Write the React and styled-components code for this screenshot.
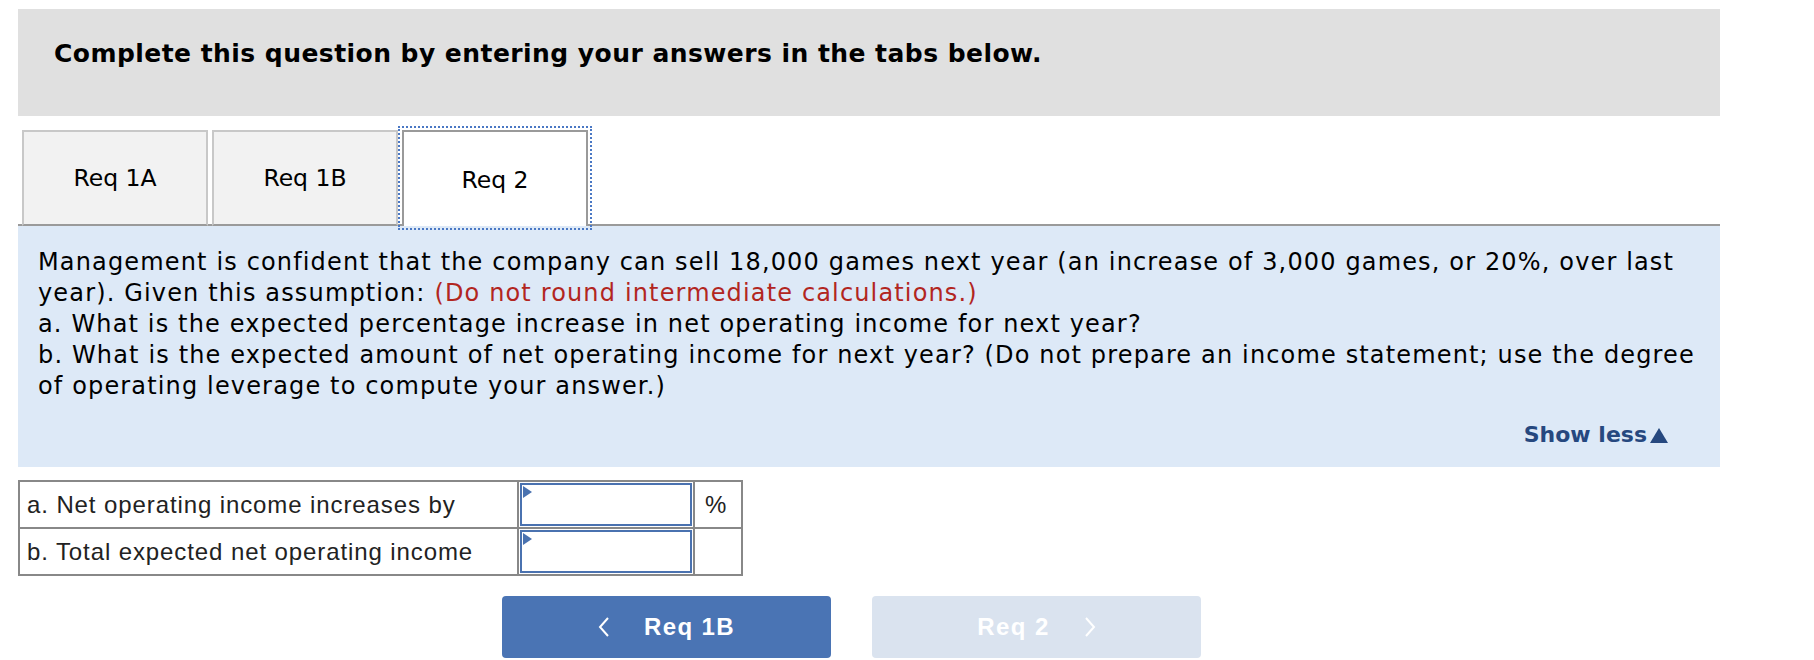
import React from "react";
import styled, { createGlobalStyle } from "styled-components";

const GlobalStyle = createGlobalStyle`
  body {
    margin: 0;
    background: #fff;
    font-family: "DejaVu Sans", Verdana, sans-serif;
    color: #000;
  }
`;

const Page = styled.div`
  width: 1702px;
  padding: 9px 0 0 18px;
`;

const Header = styled.div`
  height: 107px;
  box-sizing: border-box;
  padding: 30px 36px 0;
  background: #e0e0e0;
  font-size: 25px;
  line-height: 30px;
  font-weight: bold;
  letter-spacing: 0.45px;
`;

const TabRow = styled.div`
  display: flex;
  gap: 4px;
  margin-top: 14px;
  padding-left: 4px;
  height: 94px;
  border-bottom: 2px solid #9a9a9a;
`;

const Tab = styled.div`
  width: 186px;
  height: 96px;
  box-sizing: border-box;
  display: flex;
  align-items: center;
  justify-content: center;
  font-size: 23.5px;
  background: ${p => (p.$active ? "#fff" : "#f2f2f2")};
  border: 2px solid ${p => (p.$active ? "#9a9a9a" : "#c8c8c8")};
  border-bottom: ${p => (p.$active ? "none" : "2px solid #9a9a9a")};
  outline: ${p => (p.$active ? "2px dotted #4a78c4" : "none")};
  outline-offset: 2px;
  padding-top: ${p => (p.$active ? "2px" : "0")};
`;

const Panel = styled.div`
  height: 241px;
  box-sizing: border-box;
  padding: 21px 20px 0;
  background: #dde9f7;
`;

const Prompt = styled.p`
  margin: 0;
  font-size: 24px;
  line-height: 31px;
  letter-spacing: 1.15px;
  white-space: nowrap;
`;

const Note = styled.span`
  color: #b2261f;
`;

const ShowLessRow = styled.div`
  display: flex;
  justify-content: flex-end;
  align-items: center;
  margin-top: 20px;
  padding-right: 32px;
  font-size: 22px;
  line-height: 26px;
  font-weight: bold;
  color: #26487f;
`;

const Triangle = styled.span`
  display: inline-block;
  margin-left: 3px;
  width: 0;
  height: 0;
  border-left: 9.5px solid transparent;
  border-right: 9.5px solid transparent;
  border-bottom: 15px solid #26487f;
`;

const AnswerTable = styled.table`
  margin-top: 13px;
  border-collapse: collapse;
  border: 2px solid #777;
  font-family: "Liberation Sans", Arial, sans-serif;
`;

const LabelCell = styled.td`
  width: 499px;
  height: 43px;
  padding: 0 0 0 7px;
  border: 2px solid #888;
  font-size: 24px;
  letter-spacing: 0.9px;
  color: #222;
  box-sizing: border-box;
`;

const InputCell = styled.td`
  width: 176px;
  padding: 1px;
  border: 2px solid #888;
  box-sizing: border-box;
`;

const UnitCell = styled.td`
  width: 48px;
  padding: 0 0 0 10px;
  border: 2px solid #888;
  font-size: 24px;
  color: #222;
  box-sizing: border-box;
`;

const InputBox = styled.div`
  position: relative;
  height: 43px;
  box-sizing: border-box;
  border: 2px solid #4a72b0;
  background: #fff;

  &::before {
    content: "";
    position: absolute;
    left: 1px;
    top: 1px;
    border-top: 6px solid transparent;
    border-bottom: 6px solid transparent;
    border-left: 9px solid #4a72b0;
  }
`;

const Nav = styled.div`
  display: flex;
  gap: 41px;
  margin-top: 20px;
  padding-left: 484px;
`;

const NavButton = styled.button`
  width: 329px;
  height: 62px;
  border: none;
  border-radius: 4px;
  display: flex;
  align-items: center;
  justify-content: center;
  gap: 34px;
  background: ${p => (p.disabled ? "#dae3ef" : "#4a74b4")};
  color: #fff;
  font-family: "Liberation Sans", Arial, sans-serif;
  font-size: 24px;
  font-weight: bold;
  letter-spacing: 1.4px;
  cursor: ${p => (p.disabled ? "default" : "pointer")};
`;

const Chevron = ({ dir }) => (
  <svg width="12" height="20" viewBox="0 0 12 20">
    <path
      d={dir === "left" ? "M10 1 L2 10 L10 19" : "M2 1 L10 10 L2 19"}
      fill="none"
      stroke="#fff"
      strokeWidth="2"
    />
  </svg>
);

const rows = [
  { label: "a. Net operating income increases by", unit: "%" },
  { label: "b. Total expected net operating income", unit: "" }
];

const App = () => (
  <Page>
    <GlobalStyle />
    <Header>Complete this question by entering your answers in the tabs below.</Header>

    <TabRow>
      <Tab>Req 1A</Tab>
      <Tab>Req 1B</Tab>
      <Tab $active>Req 2</Tab>
    </TabRow>

    <Panel>
      <Prompt>
        Management is confident that the company can sell 18,000 games next year (an
        increase of 3,000 games, or 20%, over last
        <br />
        year). Given this assumption: <Note>(Do not round intermediate calculations.)</Note>
        <br />
        a. What is the expected percentage increase in net operating income for next year?
        <br />
        b. What is the expected amount of net operating income for next year? (Do not
        prepare an income statement; use the degree
        <br />
        of operating leverage to compute your answer.)
      </Prompt>
      <ShowLessRow>
        Show less
        <Triangle />
      </ShowLessRow>
    </Panel>

    <AnswerTable>
      <tbody>
        {rows.map(row => (
          <tr key={row.label}>
            <LabelCell>{row.label}</LabelCell>
            <InputCell>
              <InputBox />
            </InputCell>
            <UnitCell>{row.unit}</UnitCell>
          </tr>
        ))}
      </tbody>
    </AnswerTable>

    <Nav>
      <NavButton>
        <Chevron dir="left" />
        Req 1B
      </NavButton>
      <NavButton disabled>
        Req 2
        <Chevron dir="right" />
      </NavButton>
    </Nav>
  </Page>
);

export default App;
